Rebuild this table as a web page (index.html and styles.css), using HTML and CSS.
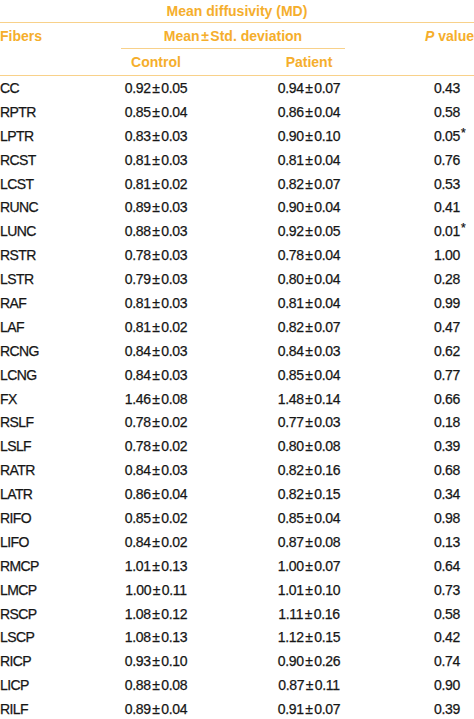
FILE: index.html
```html
<!DOCTYPE html>
<html>
<head>
<meta charset="utf-8">
<link rel="stylesheet" href="styles.css">
</head>
<body>
<table class="md">
  <colgroup>
    <col class="c-fib"><col class="c-ctl"><col class="c-gap"><col class="c-pat"><col class="c-p">
  </colgroup>
  <thead>
    <tr class="h1">
      <th colspan="5" class="ttl">Mean diffusivity (MD)</th>
    </tr>
    <tr class="h2">
      <th class="fib">Fibers</th>
      <th colspan="3" class="msd">Mean<span class="pm">±</span>Std. deviation</th>
      <th class="pv"><i>P</i> value</th>
    </tr>
    <tr class="h3">
      <th class="e"></th>
      <th class="ctr">Control</th>
      <th class="e"></th>
      <th class="ctr">Patient</th>
      <th class="e"></th>
    </tr>
  </thead>
  <tbody>
    <tr><td class="f">CC</td><td class="v">0.92<span class="pm">±</span>0.05</td><td></td><td class="v">0.94<span class="pm">±</span>0.07</td><td class="p">0.43</td></tr>
    <tr><td class="f">RPTR</td><td class="v">0.85<span class="pm">±</span>0.04</td><td></td><td class="v">0.86<span class="pm">±</span>0.04</td><td class="p">0.58</td></tr>
    <tr><td class="f">LPTR</td><td class="v">0.83<span class="pm">±</span>0.03</td><td></td><td class="v">0.90<span class="pm">±</span>0.10</td><td class="p">0.05<sup>*</sup></td></tr>
    <tr><td class="f">RCST</td><td class="v">0.81<span class="pm">±</span>0.03</td><td></td><td class="v">0.81<span class="pm">±</span>0.04</td><td class="p">0.76</td></tr>
    <tr><td class="f">LCST</td><td class="v">0.81<span class="pm">±</span>0.02</td><td></td><td class="v">0.82<span class="pm">±</span>0.07</td><td class="p">0.53</td></tr>
    <tr><td class="f">RUNC</td><td class="v">0.89<span class="pm">±</span>0.03</td><td></td><td class="v">0.90<span class="pm">±</span>0.04</td><td class="p">0.41</td></tr>
    <tr><td class="f">LUNC</td><td class="v">0.88<span class="pm">±</span>0.03</td><td></td><td class="v">0.92<span class="pm">±</span>0.05</td><td class="p">0.01<sup>*</sup></td></tr>
    <tr><td class="f">RSTR</td><td class="v">0.78<span class="pm">±</span>0.03</td><td></td><td class="v">0.78<span class="pm">±</span>0.04</td><td class="p">1.00</td></tr>
    <tr><td class="f">LSTR</td><td class="v">0.79<span class="pm">±</span>0.03</td><td></td><td class="v">0.80<span class="pm">±</span>0.04</td><td class="p">0.28</td></tr>
    <tr><td class="f">RAF</td><td class="v">0.81<span class="pm">±</span>0.03</td><td></td><td class="v">0.81<span class="pm">±</span>0.04</td><td class="p">0.99</td></tr>
    <tr><td class="f">LAF</td><td class="v">0.81<span class="pm">±</span>0.02</td><td></td><td class="v">0.82<span class="pm">±</span>0.07</td><td class="p">0.47</td></tr>
    <tr><td class="f">RCNG</td><td class="v">0.84<span class="pm">±</span>0.03</td><td></td><td class="v">0.84<span class="pm">±</span>0.03</td><td class="p">0.62</td></tr>
    <tr><td class="f">LCNG</td><td class="v">0.84<span class="pm">±</span>0.03</td><td></td><td class="v">0.85<span class="pm">±</span>0.04</td><td class="p">0.77</td></tr>
    <tr><td class="f">FX</td><td class="v">1.46<span class="pm">±</span>0.08</td><td></td><td class="v">1.48<span class="pm">±</span>0.14</td><td class="p">0.66</td></tr>
    <tr><td class="f">RSLF</td><td class="v">0.78<span class="pm">±</span>0.02</td><td></td><td class="v">0.77<span class="pm">±</span>0.03</td><td class="p">0.18</td></tr>
    <tr><td class="f">LSLF</td><td class="v">0.78<span class="pm">±</span>0.02</td><td></td><td class="v">0.80<span class="pm">±</span>0.08</td><td class="p">0.39</td></tr>
    <tr><td class="f">RATR</td><td class="v">0.84<span class="pm">±</span>0.03</td><td></td><td class="v">0.82<span class="pm">±</span>0.16</td><td class="p">0.68</td></tr>
    <tr><td class="f">LATR</td><td class="v">0.86<span class="pm">±</span>0.04</td><td></td><td class="v">0.82<span class="pm">±</span>0.15</td><td class="p">0.34</td></tr>
    <tr><td class="f">RIFO</td><td class="v">0.85<span class="pm">±</span>0.02</td><td></td><td class="v">0.85<span class="pm">±</span>0.04</td><td class="p">0.98</td></tr>
    <tr><td class="f">LIFO</td><td class="v">0.84<span class="pm">±</span>0.02</td><td></td><td class="v">0.87<span class="pm">±</span>0.08</td><td class="p">0.13</td></tr>
    <tr><td class="f">RMCP</td><td class="v">1.01<span class="pm">±</span>0.13</td><td></td><td class="v">1.00<span class="pm">±</span>0.07</td><td class="p">0.64</td></tr>
    <tr><td class="f">LMCP</td><td class="v">1.00<span class="pm">±</span>0.11</td><td></td><td class="v">1.01<span class="pm">±</span>0.10</td><td class="p">0.73</td></tr>
    <tr><td class="f">RSCP</td><td class="v">1.08<span class="pm">±</span>0.12</td><td></td><td class="v">1.11<span class="pm">±</span>0.16</td><td class="p">0.58</td></tr>
    <tr><td class="f">LSCP</td><td class="v">1.08<span class="pm">±</span>0.13</td><td></td><td class="v">1.12<span class="pm">±</span>0.15</td><td class="p">0.42</td></tr>
    <tr><td class="f">RICP</td><td class="v">0.93<span class="pm">±</span>0.10</td><td></td><td class="v">0.90<span class="pm">±</span>0.26</td><td class="p">0.74</td></tr>
    <tr><td class="f">LICP</td><td class="v">0.88<span class="pm">±</span>0.08</td><td></td><td class="v">0.87<span class="pm">±</span>0.11</td><td class="p">0.90</td></tr>
    <tr><td class="f">RILF</td><td class="v">0.89<span class="pm">±</span>0.04</td><td></td><td class="v">0.91<span class="pm">±</span>0.07</td><td class="p">0.39</td></tr>
  </tbody>
</table>
</body>
</html>
```

FILE: styles.css
```css
html, body {
  margin: 0;
  padding: 0;
  background: #ffffff;
}

.md {
  width: 474px;
  table-layout: fixed;
  border-collapse: separate;
  border-spacing: 0;
  font-family: "Liberation Sans", Arial, sans-serif;
  font-size: 14px;
  color: #161616;
}

.c-fib { width: 121px; }
.c-ctl { width: 70px; }
.c-gap { width: 82px; }
.c-pat { width: 72px; }
.c-p { width: 129px; }

.md th, .md td {
  padding: 0;
  white-space: nowrap;
  vertical-align: middle;
  line-height: 16px;
}

.md th {
  color: #f5ae2c;
  font-weight: bold;
}

.h1 th {
  height: 22px;
  text-align: center;
  border-bottom: 1px solid #f8d18a;
}

.h2 th {
  height: 25px;
}

.fib {
  text-align: left;
}

.msd {
  text-align: center;
  border-bottom: 1px solid #f8d18a;
}

.pv {
  text-align: right;
}

.pv i {
  font-style: italic;
}

.h3 th {
  height: 26px;
  text-align: center;
  border-bottom: 1px solid #f8d18a;
}

.md tbody td {
  height: 23.9px;
  text-align: left;
  -webkit-text-stroke: 0.25px #161616;
}

.md tbody td.f {
  letter-spacing: -0.6px;
}

.md tbody td.v {
  text-align: center;
  letter-spacing: -0.3px;
}

.md tbody td.p {
  padding-left: 89px;
  letter-spacing: -0.3px;
}

.pm {
  padding: 0 1.5px;
}

.md sup {
  font-size: 12px;
  line-height: 0;
  vertical-align: 4px;
  margin-left: 1px;
}
```
